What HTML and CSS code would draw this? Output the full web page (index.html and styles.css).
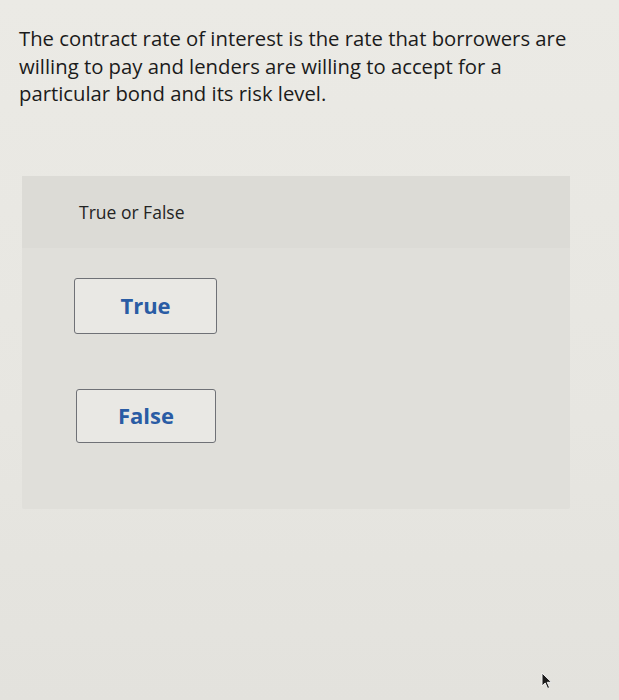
FILE: index.html
```html
<!DOCTYPE html>
<html lang="en">
<head>
<meta charset="utf-8">
<title>True or False</title>
<link rel="stylesheet" href="styles.css">
</head>
<body>
<main class="page">
  <p class="prompt">The contract rate of interest is the rate that borrowers are willing to pay and lenders are willing to accept for a particular bond and its risk level.</p>
  <section class="card">
    <div class="card-head">True or False</div>
    <div class="choices">
      <button class="choice choice-true" type="button">True</button>
      <button class="choice choice-false" type="button">False</button>
    </div>
  </section>
</main>
<svg class="cursor" width="14" height="18" viewBox="0 0 14 18" aria-hidden="true">
  <path d="M2 1 L2 14 L5.2 11 L7.6 16.5 L9.6 15.6 L7.2 10.3 L11.5 10.3 Z" fill="#1b1b1b" stroke="#f2f2f2" stroke-width="1"/>
</svg>
</body>
</html>
```
FILE: styles.css
```css
html, body {
  margin: 0;
  padding: 0;
}
body {
  width: 619px;
  height: 700px;
  overflow: hidden;
  position: relative;
  background: linear-gradient(180deg, #ebeae5 0%, #e7e6e1 60%, #e3e2dd 100%);
  font-family: "Open Sans", "Lato", sans-serif;
  color: #1f1f1f;
}
.page {
  padding: 25px 0 0 19px;
}
.prompt {
  margin: 0;
  width: 560px;
  font-size: 20.3px;
  line-height: 27.5px;
  color: #1b1b1b;
}
.card {
  margin: 68px 0 0 3px;
  width: 548px;
  height: 333px;
  background: #e0dfda;
  border-radius: 2px;
}
.card-head {
  height: 72px;
  box-sizing: border-box;
  padding: 24px 0 0 57px;
  font-size: 17.5px;
  line-height: 24px;
  color: #242424;
  background: #dcdbd6;
}
.choices {
  display: flex;
  flex-direction: column;
  align-items: flex-start;
  gap: 55px;
  padding: 30px 0 0 52px;
}
.choice {
  width: 143px;
  height: 56px;
  background: #e9e8e4;
  border: 1px solid #6f7176;
  border-radius: 3px;
  font-family: "Open Sans", "Lato", sans-serif;
  font-weight: 700;
  font-size: 22px;
  color: #2a5ca4;
  padding: 0 0 2px;
}
.choice-false {
  margin-left: 2px;
  width: 140px;
  height: 54px;
}
.cursor {
  position: absolute;
  left: 540px;
  top: 672px;
}
```
